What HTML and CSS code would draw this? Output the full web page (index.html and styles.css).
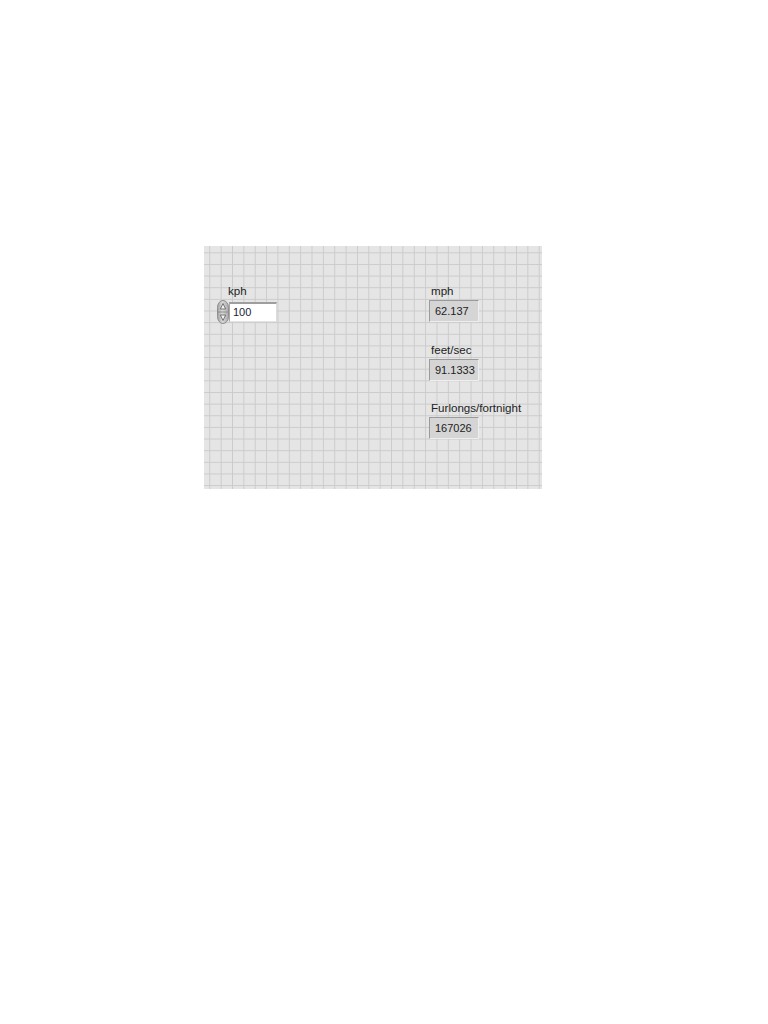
FILE: index.html
```html
<!DOCTYPE html>
<html>
<head>
<meta charset="utf-8">
<title>Speed converter</title>
<link rel="stylesheet" href="styles.css">
</head>
<body>
<div class="panel">
  <div class="col-left">
    <div class="group">
      <div class="label label-control">kph</div>
      <div class="control-row">
        <svg class="spinner" width="12" height="24" viewBox="0 0 12 24">
          <defs>
            <linearGradient id="sg" x1="0" x2="1" y1="0" y2="0">
              <stop offset="0" stop-color="#a2a2a2"/>
              <stop offset="0.45" stop-color="#dadada"/>
              <stop offset="1" stop-color="#a8a8a8"/>
            </linearGradient>
          </defs>
          <rect x="0.5" y="0.5" width="11" height="23" rx="5.5" ry="7" fill="url(#sg)" stroke="#8e8e8e" stroke-width="1"/>
          <line x1="1" y1="12" x2="11" y2="12" stroke="#8e8e8e" stroke-width="1"/>
          <path d="M6 3.5 L8.6 9 L3.4 9 Z" fill="#f4f4f4" stroke="#5a5a5a" stroke-width="0.8" stroke-linejoin="round"/>
          <path d="M6 20.5 L8.6 15 L3.4 15 Z" fill="#f4f4f4" stroke="#5a5a5a" stroke-width="0.8" stroke-linejoin="round"/>
        </svg>
        <div class="num-control">100</div>
      </div>
    </div>
  </div>
  <div class="col-right">
    <div class="group">
      <div class="label">mph</div>
      <div class="num-indicator">62.137</div>
    </div>
    <div class="group">
      <div class="label">feet/sec</div>
      <div class="num-indicator">91.1333</div>
    </div>
    <div class="group">
      <div class="label">Furlongs/fortnight</div>
      <div class="num-indicator">167026</div>
    </div>
  </div>
</div>
</body>
</html>
```

FILE: styles.css
```css
html, body {
  margin: 0;
  padding: 0;
  background: #ffffff;
}

body {
  font-family: "Liberation Sans", Arial, sans-serif;
  color: #1e1e1e;
}

.panel {
  box-sizing: border-box;
  width: 338px;
  height: 243px;
  margin: 246px 0 0 204px;
  padding: 38px 0 0 13px;
  display: flex;
  background-color: #e5e5e5;
  background-image:
    linear-gradient(to right, #cbcbcb 1px, transparent 1px),
    linear-gradient(to bottom, #cbcbcb 1px, transparent 1px);
  background-size: 11.36px 11.65px;
  background-position: 5.3px 6.3px;
}

.col-left {
  width: 212px;
  flex: none;
}

.col-right {
  display: flex;
  flex-direction: column;
  gap: 20.5px;
}

.group {
  display: flex;
  flex-direction: column;
  gap: 2px;
}

.label {
  font-size: 11.6px;
  line-height: 14px;
  height: 14px;
  padding-left: 2px;
  white-space: nowrap;
  color: #222222;
}

.label-control {
  padding-left: 11px;
}

.control-row {
  display: flex;
  align-items: center;
}

.spinner {
  display: block;
  flex: none;
}

.num-control {
  box-sizing: border-box;
  width: 48px;
  height: 20px;
  background: #ffffff;
  border-top: 2px solid #9e9e9e;
  border-left: 1px solid #a8a8a8;
  border-right: 1px solid #dcdcdc;
  border-bottom: 1px solid #e4e4e4;
  font-size: 11px;
  line-height: 17px;
  padding-left: 3px;
  color: #1a2238;
}

.num-indicator {
  box-sizing: border-box;
  width: 50px;
  height: 22px;
  background: #d5d5d5;
  border-top: 1px solid #9a9a9a;
  border-left: 1px solid #9a9a9a;
  border-right: 1px solid #eeeeee;
  border-bottom: 1px solid #eeeeee;
  font-size: 11px;
  line-height: 20px;
  padding-left: 5px;
  color: #222222;
}
```
